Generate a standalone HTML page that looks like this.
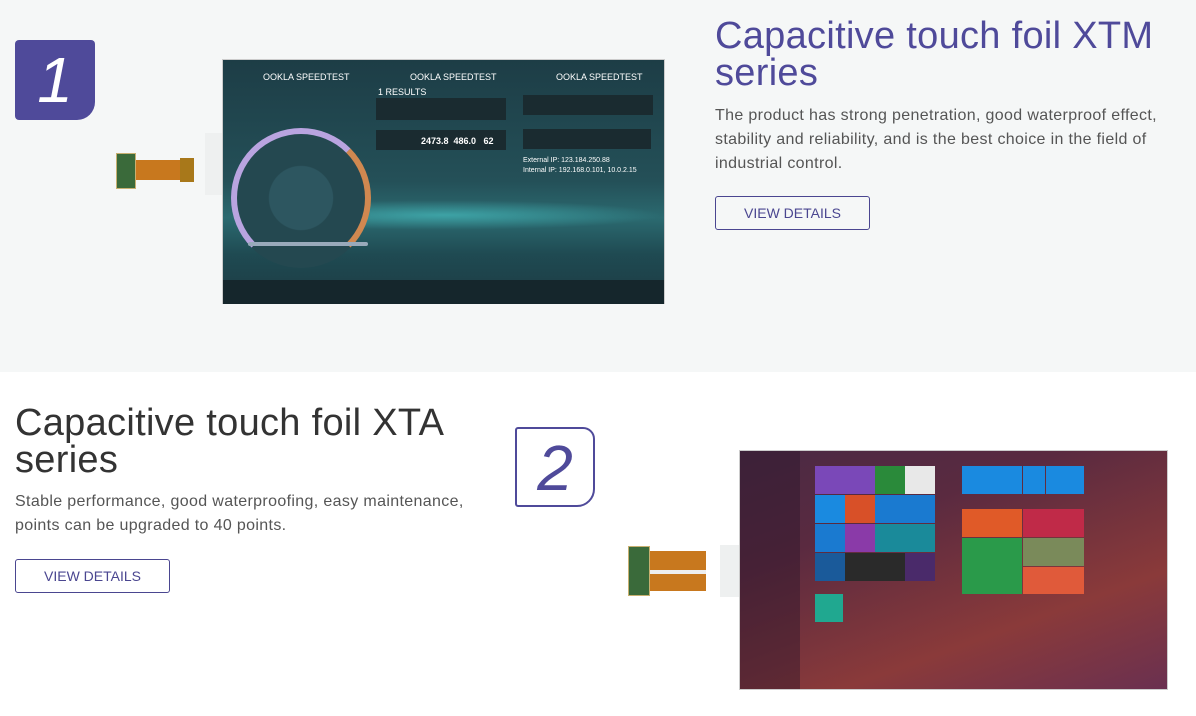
<!DOCTYPE html>
<html><head><meta charset="utf-8"><style>
*{margin:0;padding:0;box-sizing:border-box}
body{width:1196px;height:716px;overflow:hidden;background:#fff;font-family:"Liberation Sans",sans-serif;position:relative}
.top{position:absolute;left:0;top:0;width:1196px;height:372px;background:#f5f7f7}
.abs{position:absolute}
h2{position:absolute;font-weight:normal;font-size:38px;line-height:37px;letter-spacing:0.3px}
p.d{position:absolute;font-size:16px;line-height:24px;color:#555;letter-spacing:0.35px}
.btn{position:absolute;border:1px solid #4a4690;border-radius:3px;color:#4a4690;font-size:14px;text-align:center;line-height:32px;height:34px;width:155px}
.b1{position:absolute;left:15px;top:40px;width:80px;height:80px;background:#4f4a9a;border-radius:4px 4px 18px 4px;color:#fff;font:italic 64px/80px "Liberation Sans",sans-serif;text-align:center}
.b2{position:absolute;left:515px;top:427px;width:80px;height:80px;border:2px solid #4f4a9a;border-radius:3px 12px 18px 3px;color:#4f4a9a;font:italic 64px/78px "Liberation Sans",sans-serif;text-align:center}
.t{position:absolute;font-size:8px;color:#fff}
</style></head><body>
<div class="top"></div>
<div class="b1">1</div>
<!-- flex 1 -->
<div class="abs" style="left:205px;top:133px;width:18px;height:62px;background:#eef0f0"></div>
<div class="abs" style="left:128px;top:160px;width:64px;height:20px;background:#c8781e"></div>
<div class="abs" style="left:180px;top:158px;width:14px;height:24px;background:#a8781a"></div>
<div class="abs" style="left:116px;top:153px;width:20px;height:36px;background:#3a6a3a;border:1px solid #c8b070"></div>
<!-- screen 1 -->
<div class="abs" style="left:222px;top:59px;width:443px;height:245px;background:linear-gradient(180deg,#1d3d46 0%,#245058 50%,#2b6a70 65%,#1f4a52 80%,#1c3b43 100%);border:1px solid #ccc">
 <div class="abs" style="left:0;top:220px;width:441px;height:24px;background:#15262c"></div>
 <div class="abs" style="left:0;top:140px;width:441px;height:30px;background:radial-gradient(ellipse at 50% 50%,rgba(80,220,220,.5),rgba(0,0,0,0) 70%)"></div>
 <div class="abs" style="left:8px;top:68px;width:140px;height:140px;border-radius:50%;border:6px solid #b9a4e0;border-bottom-color:transparent;border-right-color:#d08850;background:radial-gradient(circle,#2d5660 0 35%,#244850 36%)"></div>
 <div class="t" style="left:40px;top:12px;font-size:9px">OOKLA SPEEDTEST</div>
 <div class="t" style="left:187px;top:12px;font-size:9px">OOKLA SPEEDTEST</div>
 <div class="t" style="left:333px;top:12px;font-size:9px">OOKLA SPEEDTEST</div>
 <div class="t" style="left:155px;top:27px;font-size:9px">1 RESULTS</div>
 <div class="abs" style="left:153px;top:38px;width:130px;height:22px;background:#1a2b30"></div>
 <div class="abs" style="left:153px;top:70px;width:130px;height:20px;background:#1a2b30"></div>
 <div class="t" style="left:198px;top:76px;font-size:9px;font-weight:bold">2473.8 &nbsp;486.0 &nbsp; 62</div>
 <div class="abs" style="left:300px;top:35px;width:130px;height:20px;background:#1a2b30"></div>
 <div class="abs" style="left:300px;top:69px;width:128px;height:20px;background:#1a2b30"></div>
 <div class="t" style="left:300px;top:96px;font-size:7px;line-height:10px">External IP: 123.184.250.88<br>Internal IP: 192.168.0.101, 10.0.2.15</div>
 <div class="abs" style="left:25px;top:182px;width:120px;height:4px;background:#9ab;border-radius:2px"></div>
</div>
<h2 style="left:715px;top:18px;color:#4f4a9a">Capacitive touch foil XTM<br>series</h2>
<p class="d" style="left:715px;top:104px">The product has strong penetration, good waterproof effect,<br>stability and reliability, and is the best choice in the field of<br>industrial control.</p>
<div class="btn" style="left:715px;top:196px">VIEW DETAILS</div>

<h2 style="left:15px;top:405px;color:#333">Capacitive touch foil XTA<br>series</h2>
<p class="d" style="left:15px;top:490px">Stable performance, good waterproofing, easy maintenance,<br>points can be upgraded to 40 points.</p>
<div class="btn" style="left:15px;top:559px;width:155px">VIEW DETAILS</div>
<div class="b2">2</div>
<!-- flex 2 -->
<div class="abs" style="left:720px;top:545px;width:20px;height:52px;background:#eef0f0"></div>
<div class="abs" style="left:640px;top:551px;width:66px;height:40px;background:#c8781e"></div>
<div class="abs" style="left:648px;top:570px;width:58px;height:4px;background:#eee"></div>
<div class="abs" style="left:628px;top:546px;width:22px;height:50px;background:#3a6a3a;border:1px solid #c8b070"></div>
<!-- screen 2 -->
<div class="abs" style="left:739px;top:450px;width:429px;height:240px;border:1px solid #ccc;background:linear-gradient(160deg,#4a2a44 0%,#5a2a40 30%,#8a3a3a 70%,#6a3050 100%)">
 <div class="abs" style="left:0;top:0;width:60px;height:238px;background:rgba(40,20,40,.4)"></div>
 <div class="abs" style="left:75px;top:15px;width:60px;height:28px;background:#7a48b8"></div>
 <div class="abs" style="left:135px;top:15px;width:30px;height:28px;background:#2a8a3a"></div>
 <div class="abs" style="left:165px;top:15px;width:30px;height:28px;background:#e8e8e8"></div>
 <div class="abs" style="left:75px;top:44px;width:30px;height:28px;background:#1a8ae0"></div>
 <div class="abs" style="left:105px;top:44px;width:30px;height:28px;background:#d85028"></div>
 <div class="abs" style="left:135px;top:44px;width:60px;height:28px;background:#1a7ad0"></div>
 <div class="abs" style="left:75px;top:73px;width:30px;height:28px;background:#1a7ad0"></div>
 <div class="abs" style="left:105px;top:73px;width:30px;height:28px;background:#8a3aa8"></div>
 <div class="abs" style="left:135px;top:73px;width:60px;height:28px;background:#1a8a9a"></div>
 <div class="abs" style="left:75px;top:102px;width:30px;height:28px;background:#1a5a9a"></div>
 <div class="abs" style="left:105px;top:102px;width:60px;height:28px;background:#2a2a2a"></div>
 <div class="abs" style="left:165px;top:102px;width:30px;height:28px;background:#4a2a6a"></div>
 <div class="abs" style="left:75px;top:143px;width:28px;height:28px;background:#20a890"></div>
 <div class="abs" style="left:222px;top:15px;width:60px;height:28px;background:#1a8ae0"></div>
 <div class="abs" style="left:283px;top:15px;width:22px;height:28px;background:#1a8ae0"></div>
 <div class="abs" style="left:306px;top:15px;width:38px;height:28px;background:#1a8ae0"></div>
 <div class="abs" style="left:222px;top:58px;width:60px;height:28px;background:#e05a28"></div>
 <div class="abs" style="left:283px;top:58px;width:61px;height:28px;background:#c02a48"></div>
 <div class="abs" style="left:222px;top:87px;width:60px;height:56px;background:#2a9a4a"></div>
 <div class="abs" style="left:283px;top:87px;width:61px;height:28px;background:#7a8a5a"></div>
 <div class="abs" style="left:283px;top:116px;width:61px;height:27px;background:#e05a3a"></div>
</div>
</body></html>
